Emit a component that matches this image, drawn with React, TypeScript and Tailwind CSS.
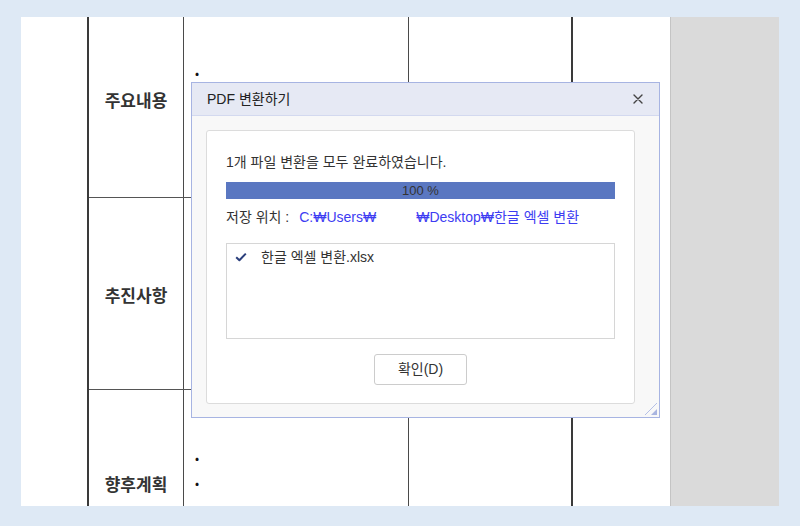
import React from "react";

const font = { fontFamily: '"Liberation Sans", "Noto Sans CJK KR", sans-serif' };
const cjk = { fontFamily: '"Noto Sans CJK KR", "Noto Sans", sans-serif' };

const rows = [
  { label: "주요내용", height: "h-[180px]", labelPad: "pt-[71px]", bullets: 1, bulletPad: "pt-[48px]" },
  { label: "추진사항", height: "h-[192px]", labelPad: "pt-[85px]", bullets: 0, bulletPad: "" },
  { label: "향후계획", height: "h-[130px]", labelPad: "pt-[82px]", bullets: 2, bulletPad: "pt-[60px]" },
];

const CloseIcon = () => (
  <svg width="10" height="10" viewBox="0 0 10 10" className="block">
    <path d="M1 1 L9 9 M9 1 L1 9" stroke="#444" strokeWidth="1.4" strokeLinecap="round" />
  </svg>
);

const CheckIcon = () => (
  <svg width="12" height="10" viewBox="0 0 12 10" className="block">
    <path d="M1.2 5.2 L4.4 8.2 L10.8 1.6" stroke="#2b3f7c" strokeWidth="2" fill="none" strokeLinejoin="round" />
  </svg>
);

const Grip = () => (
  <svg width="14" height="14" viewBox="0 0 14 14" className="block">
    <path d="M1 13 L13 1" stroke="#b5c0e6" strokeWidth="1" />
    <path d="M7 13 L13 7 L13 13 Z" fill="#a9b5e0" />
  </svg>
);

const ConvertDialog: React.FC = () => {
  return (
    <div className="absolute left-[170px] top-[65px] w-[469px] h-[336px] border border-[#a7b4e2] bg-[#f8f8f8] flex flex-col" style={font}>
      <div className="h-[33px] shrink-0 bg-[#e6e9f4] border-b border-[#d3d9ef] flex items-center justify-between pl-[15px] pr-[16px]">
        <span className="text-[14px] text-[#222]">PDF 변환하기</span>
        <CloseIcon />
      </div>

      <div className="pl-[14px] pt-[14px]">
        <div className="w-[429px] h-[274px] bg-white border border-[#dcdcdc] rounded-[3px] px-[19px] pt-[23px]">
          <p className="h-[16px] leading-[16px] text-[14px] text-[#333]">1개 파일 변환을 모두 완료하였습니다.</p>

          <div className="mt-[12px] h-[17px] bg-[#5a77c1] flex items-center justify-center text-[13px] text-[#333] leading-none">
            100 %
          </div>

          <div className="mt-[10px] h-[16px] leading-[16px] text-[14px] flex whitespace-nowrap">
            <span className="text-[#333]">저장 위치 :</span>
            <span className="ml-[10px] text-[#3d3cf2]">C:₩Users₩</span>
            <span className="ml-[40px] text-[#3d3cf2]">₩Desktop₩한글 엑셀 변환</span>
          </div>

          <div className="mt-[18px] h-[96px] border border-[#d6d6d6] bg-white pt-[4px] pl-[8px]">
            <div className="flex items-center h-[18px]">
              <CheckIcon />
              <span className="ml-[14px] text-[14px] text-[#333]">한글 엑셀 변환.xlsx</span>
            </div>
          </div>

          <div className="mt-[15px] flex justify-center">
            <button className="w-[93px] h-[31px] border border-[#cccccc] rounded-[3px] bg-white text-[14px] text-[#333]">
              확인(D)
            </button>
          </div>
        </div>
      </div>

      <div className="absolute right-[1px] bottom-[1px]">
        <Grip />
      </div>
    </div>
  );
};

export default function App() {
  return (
    <div className="w-[800px] h-[526px] bg-[#dee9f5] pt-[17px] pl-[21px] overflow-hidden" style={cjk}>
      <div className="flex w-[758px] h-[489px] overflow-hidden">
        <div className="relative w-[649px] h-full bg-white overflow-hidden">
          <div className="ml-[66px] w-[486px] border-l-2 border-r-2 border-[#3a3a3a]">
            {rows.map((row, i) => (
              <div
                key={row.label}
                className={`flex ${row.height} ${i > 0 ? "border-t-[1.5px] border-[#555]" : ""}`}
              >
                <div className={`w-[95px] border-r border-[#4a4a4a] text-center ${row.labelPad}`}>
                  <span className="text-[17px] font-bold text-[#333] leading-[20px]">{row.label}</span>
                </div>
                <div className={`w-[225px] border-r border-[#4a4a4a] pl-[11px] ${row.bulletPad}`}>
                  {Array.from({ length: row.bullets }).map((_, b) => (
                    <div key={b} className="h-[25px] text-[12px] leading-[16px] text-[#111]">•</div>
                  ))}
                </div>
                <div className="flex-1" />
              </div>
            ))}
          </div>
          <ConvertDialog />
        </div>
        <div className="flex-1 h-full bg-[#dadada] border-l border-[#c4c4c4]" />
      </div>
    </div>
  );
}
